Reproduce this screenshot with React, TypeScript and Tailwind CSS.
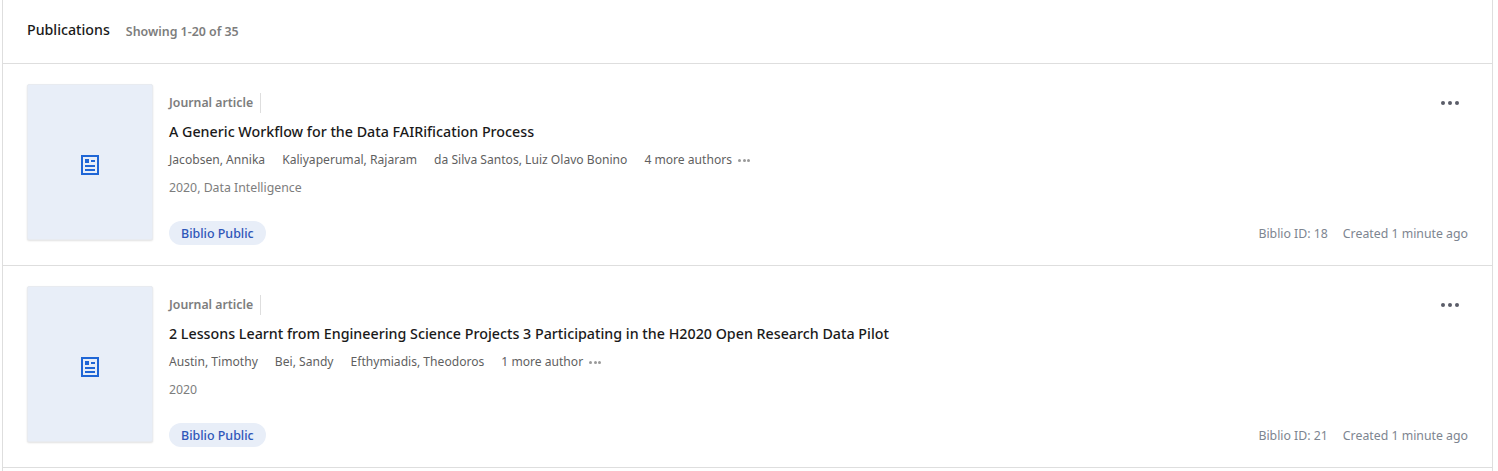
const Doc = () => (
  <svg width="18" height="20" viewBox="0 0 18 20" fill="none" className="block">
    <rect x="1" y="1" width="16" height="18" stroke="#1f66d6" strokeWidth="2" />
    <rect x="4" y="4" width="4" height="4" fill="#1f66d6" />
    <rect x="10" y="5" width="4" height="2" fill="#1f66d6" />
    <rect x="4" y="10" width="10" height="2" fill="#1f66d6" />
    <rect x="4" y="14" width="10" height="2" fill="#1f66d6" />
  </svg>
);

type Pub = { title: string; authors: string[]; more: string; meta: string; id: number };

const pubs: Pub[] = [
  {
    title: "A Generic Workflow for the Data FAIRification Process",
    authors: ["Jacobsen, Annika", "Kaliyaperumal, Rajaram", "da Silva Santos, Luiz Olavo Bonino"],
    more: "4 more authors",
    meta: "2020, Data Intelligence",
    id: 18,
  },
  {
    title: "2 Lessons Learnt from Engineering Science Projects 3 Participating in the H2020 Open Research Data Pilot",
    authors: ["Austin, Timothy", "Bei, Sandy", "Efthymiadis, Theodoros"],
    more: "1 more author",
    meta: "2020",
    id: 21,
  },
];

const Row = ({ p }: { p: Pub }) => (
  <div className="flex h-[202px] border-b border-[#dedede] pl-6 pr-6 pt-5">
    <div className="flex h-[156px] w-[126px] shrink-0 items-center justify-center rounded-[2px] border border-[#e8ebf0] bg-[#e8eef8] pt-[6px] shadow-[0_1px_2px_rgba(0,0,0,0.12)]">
      <Doc />
    </div>
    <div className="ml-4 flex h-[161px] flex-1 flex-col">
      <div className="mt-[9px] flex h-5 items-center">
        <span className="text-[12.3px] font-semibold leading-5 text-[#7d7d7d]">Journal article</span>
        <span className="ml-[7px] h-5 w-px bg-[#dedede]" />
        <span className="ml-auto mr-[9px] flex gap-[3px]">
          <i className="size-1 rounded-full bg-[#5a5d68]" />
          <i className="size-1 rounded-full bg-[#5a5d68]" />
          <i className="size-1 rounded-full bg-[#5a5d68]" />
        </span>
      </div>
      <div className="mt-[9px] text-[14.27px] font-medium leading-5 text-[#1a1a1a]">{p.title}</div>
      <div className="mt-[8px] flex items-center gap-[17px] text-[12.1px] leading-5 text-[#5f5f5f]">
        {p.authors.map((a) => (
          <span key={a}>{a}</span>
        ))}
        <span className="flex items-center gap-[6px]">
          {p.more}
          <span className="flex gap-[1.5px]">
            <i className="size-[3px] rounded-full bg-[#9a9a9a]" />
            <i className="size-[3px] rounded-full bg-[#9a9a9a]" />
            <i className="size-[3px] rounded-full bg-[#9a9a9a]" />
          </span>
        </span>
      </div>
      <div className="mt-2 text-[12.3px] leading-5 text-[#7d7d7d]">{p.meta}</div>
      <div className="mt-auto flex items-center justify-between">
        <span className="flex h-6 items-center rounded-full bg-[#e8eef8] px-3 pt-[2px] text-[12.45px] font-medium text-[#2f56b8]">
          Biblio Public
        </span>
        <span className="flex gap-[15px] pt-[2px] text-[12.3px] text-[#7d8590]">
          <span>Biblio ID: {p.id}</span>
          <span>Created 1 minute ago</span>
        </span>
      </div>
    </div>
  </div>
);

export default function App() {
  return (
    <div className="h-[471px] overflow-hidden bg-white pl-[2px] pr-[5px] font-['Noto_Sans','Open_Sans',sans-serif]">
      <div className="h-full border-x border-[#dedede]">
        <div className="flex h-16 items-center border-b border-[#dedede] pl-6">
          <span className="mb-[4px] text-[14.2px] font-medium leading-5 text-[#1a1a1a]">Publications</span>
          <span className="ml-4 mt-px text-[12.4px] font-semibold leading-5 text-[#7d7d7d]">Showing 1-20 of 35</span>
        </div>
        {pubs.map((p) => (
          <Row key={p.id} p={p} />
        ))}
      </div>
    </div>
  );
}
